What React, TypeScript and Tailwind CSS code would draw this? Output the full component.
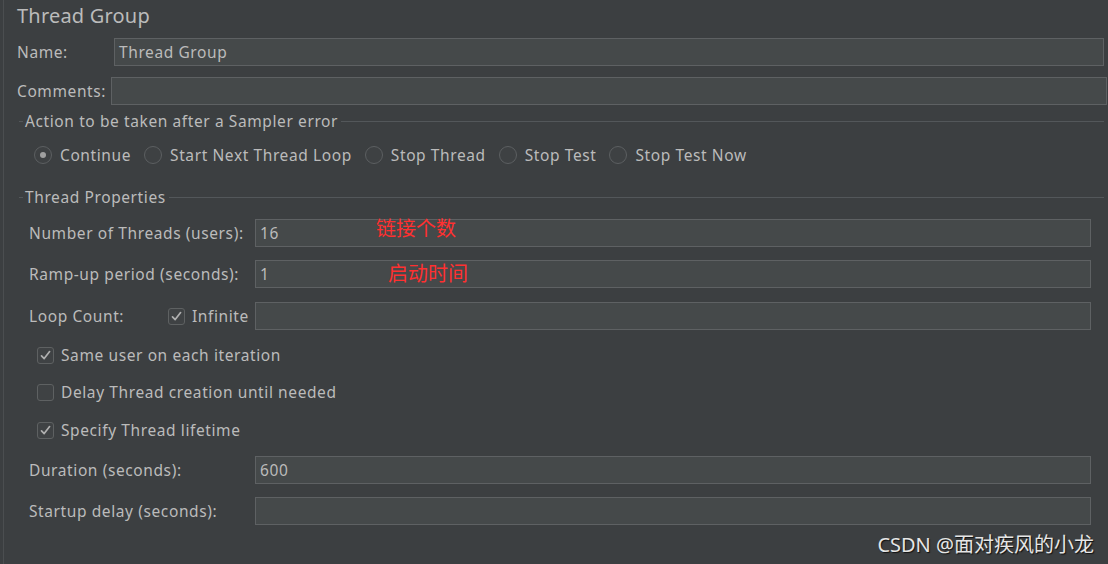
import React from "react";

const FONT = "font-['Noto_Sans','Noto_Sans_CJK_SC',sans-serif]";
const TXT = "text-[15.5px] tracking-[0.6px] text-[#bbbbbb]";

function Input({ value = "", className = "" }: { value?: string; className?: string }) {
  return (
    <div
      className={`h-[28px] border border-[#5e6163] bg-[#45494a] flex items-center pl-[4px] pt-[2px] ${TXT} ${className}`}
    >
      {value}
    </div>
  );
}

function Legend({ text }: { text: string }) {
  return (
    <div className="h-[20px] flex items-center">
      <div className="w-[4px] h-px bg-[#53575a] ml-[15px]" />
      <span className={`ml-[2px] mr-[3px] leading-none pt-[2px] ${TXT}`}>{text}</span>
      <div className="flex-1 h-px bg-[#53575a] mr-[4px]" />
    </div>
  );
}

function Radio({ label, checked = false }: { label: string; checked?: boolean }) {
  return (
    <div className="flex items-center">
      <div className="w-[18px] h-[18px] rounded-full border border-[#5c5f61] bg-[#3e4143] flex items-center justify-center">
        {checked && <div className="w-[6px] h-[6px] rounded-full bg-[#a0a0a0]" />}
      </div>
      <span className={`ml-[8px] pt-[2px] ${TXT}`}>{label}</span>
    </div>
  );
}

function Check({ checked = false }: { checked?: boolean }) {
  return (
    <div className="w-[17px] h-[17px] rounded-[3px] border border-[#5e6162] bg-[#3f4244] flex items-center justify-center">
      {checked && (
        <svg width="13" height="13" viewBox="0 0 13 13">
          <path d="M2.5 6.8 L5.2 9.6 L10.6 2.6" fill="none" stroke="#b0b0b0" strokeWidth="1.7" strokeLinecap="round" strokeLinejoin="round" />
        </svg>
      )}
    </div>
  );
}

function CheckRow({ label, checked, className = "" }: { label: string; checked?: boolean; className?: string }) {
  return (
    <div className={`h-[24px] flex items-center pl-[33px] ${className}`}>
      <Check checked={checked} />
      <span className={`ml-[7px] pt-[2px] ${TXT}`}>{label}</span>
    </div>
  );
}

function PropRow({ label, value, className = "", children }: { label: string; value?: string; className?: string; children?: React.ReactNode }) {
  return (
    <div className={`relative h-[28px] flex items-center pl-[25px] pr-[17px] ${className}`}>
      <span className={`w-[226px] shrink-0 pt-[2px] ${TXT}`}>{label}</span>
      <Input value={value} className="flex-1" />
      {children}
    </div>
  );
}

export default function App() {
  return (
    <div className={`w-[1108px] h-[564px] bg-[#3c3f41] overflow-hidden ${FONT}`}>
      <div className="ml-[3px] h-full border-l border-[#4b4e50] relative flex flex-col">
        <div className="h-[32px] flex items-center pl-[13px] text-[20px] tracking-[0.2px] text-[#bbbbbb]">Thread Group</div>

        <div className="mt-[6px] h-[28px] flex items-center pl-[13px] pr-[4px]">
          <span className={`w-[97px] shrink-0 pt-[2px] ${TXT}`}>Name:</span>
          <Input value="Thread Group" className="flex-1" />
        </div>

        <div className="mt-[11px] h-[28px] flex items-center pl-[13px] pr-[1px]">
          <span className={`w-[94px] shrink-0 pt-[2px] ${TXT}`}>Comments:</span>
          <Input className="flex-1" />
        </div>

        <div className="mt-[6px]">
          <Legend text="Action to be taken after a Sampler error" />
        </div>

        <div className="mt-[12px] h-[24px] flex items-center pl-[30px] gap-[13px]">
          <Radio label="Continue" checked />
          <Radio label="Start Next Thread Loop" />
          <Radio label="Stop Thread" />
          <Radio label="Stop Test" />
          <Radio label="Stop Test Now" />
        </div>

        <div className="mt-[20px]">
          <Legend text="Thread Properties" />
        </div>

        <PropRow label="Number of Threads (users):" value="16" className="mt-[12px]">
          <span className="absolute left-[372px] top-[-6px] text-[20px] text-[#ff3030] font-['Noto_Sans_CJK_SC',sans-serif]">链接个数</span>
        </PropRow>
        <PropRow label="Ramp-up period (seconds):" value="1" className="mt-[13px]">
          <span className="absolute left-[384px] top-[-2px] text-[20px] text-[#ff3030] font-['Noto_Sans_CJK_SC',sans-serif]">启动时间</span>
        </PropRow>

        <div className="mt-[14px] h-[28px] flex items-center pl-[25px] pr-[17px]">
          <span className={`w-[139px] shrink-0 pt-[2px] ${TXT}`}>Loop Count:</span>
          <Check checked />
          <span className={`ml-[7px] w-[63px] shrink-0 pt-[2px] ${TXT}`}>Infinite</span>
          <Input className="flex-1" />
        </div>

        <CheckRow label="Same user on each iteration" checked className="mt-[13px]" />
        <CheckRow label="Delay Thread creation until needed" className="mt-[13px]" />
        <CheckRow label="Specify Thread lifetime" checked className="mt-[14px]" />

        <PropRow label="Duration (seconds):" value="600" className="mt-[14px]" />
        <PropRow label="Startup delay (seconds):" className="mt-[13px]" />

        <div className="mt-[5px] flex justify-end pr-[14px]">
          <span className="text-[20px] text-[#e6e6e6] [text-shadow:1px_1px_1px_#111] font-['Noto_Sans','Noto_Sans_CJK_SC',sans-serif]">
            CSDN @面对疾风的小龙
          </span>
        </div>
      </div>
    </div>
  );
}
